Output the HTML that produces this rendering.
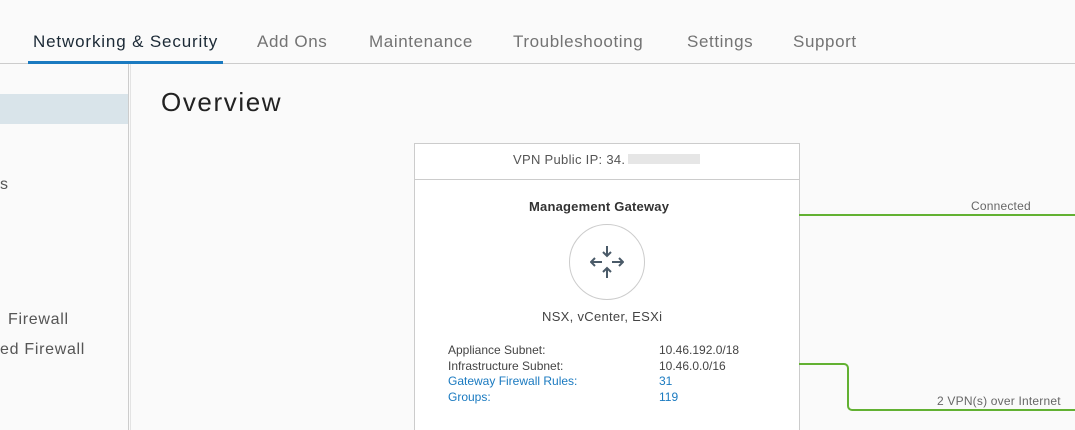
<!DOCTYPE html>
<html><head><style>
html,body{margin:0;width:1075px;height:430px;overflow:hidden}
body{background:#fafafa;font-family:"Liberation Sans",sans-serif;position:relative}
.a{position:absolute;white-space:nowrap}
.tab{top:32px;font-size:17px;color:#737373;letter-spacing:0.6px}
</style></head><body>
<div class="a" style="left:0;top:0;width:1075px;height:63px;background:#fafafa;border-bottom:1px solid #ccc"></div>
<div class="a tab" style="left:33px;color:#1c2a36;letter-spacing:0.85px">Networking &amp; Security</div>
<div class="a" style="left:28px;top:61px;width:195px;height:3px;background:#1a7ac0"></div>
<div class="a tab" style="left:257px">Add Ons</div>
<div class="a tab" style="left:369px">Maintenance</div>
<div class="a tab" style="left:513px">Troubleshooting</div>
<div class="a tab" style="left:687px">Settings</div>
<div class="a tab" style="left:793px">Support</div>
<div class="a" style="left:128px;top:64px;width:1px;height:366px;background:#ccc"></div>
<div class="a" style="left:130px;top:64px;width:1px;height:366px;background:#e3e3e3"></div>
<div class="a" style="left:0;top:94px;width:128px;height:30px;background:#d9e4ea"></div>
<div class="a" style="left:0;top:176px;font-size:16px;color:#555">s</div>
<div class="a" style="left:8px;top:311px;font-size:16px;color:#555;letter-spacing:0.7px">Firewall</div>
<div class="a" style="left:0;top:341px;font-size:16px;color:#555;letter-spacing:0.7px">ed Firewall</div>
<div class="a" style="left:161px;top:87px;font-size:26px;color:#222;letter-spacing:1.6px">Overview</div>
<div class="a" style="left:414px;top:143px;width:384px;height:300px;background:#fff;border:1px solid #ccc"></div>
<div class="a" style="left:415px;top:179px;width:384px;height:1px;background:#ccc"></div>
<div class="a" style="left:513px;top:152px;font-size:13px;color:#555;letter-spacing:0.3px">VPN Public IP: 34.</div>
<div class="a" style="left:628px;top:154px;width:72px;height:10px;background:#e6e6e6"></div>
<div class="a" style="left:529px;top:199px;font-size:13px;color:#333;font-weight:bold;letter-spacing:0.2px">Management Gateway</div>
<div class="a" style="left:569px;top:224px;width:74px;height:74px;border:1px solid #ccc;border-radius:50%"></div>
<svg class="a" style="left:590px;top:245px" width="34" height="34" viewBox="0 0 34 34" fill="none" stroke="#4a5a68" stroke-width="2">
<path d="M17 1v10M13 7l4 4 4-4M17 33V23M13 27l4-4 4 4M1 17h11M5 13l-4 4 4 4M33 17H22M29 13l4 4-4 4"/></svg>
<div class="a" style="left:542px;top:309px;font-size:13px;color:#444;letter-spacing:0.3px">NSX, vCenter, ESXi</div>
<div class="a" style="left:448px;top:343px;font-size:12px;line-height:15.5px;color:#444">Appliance Subnet:<br>Infrastructure Subnet:<br><span style="color:#1a7ac0">Gateway Firewall Rules:<br>Groups:</span></div>
<div class="a" style="left:659px;top:343px;font-size:12px;line-height:15.5px;color:#444">10.46.192.0/18<br>10.46.0.0/16<br><span style="color:#1a7ac0">31<br>119</span></div>
<div class="a" style="left:799px;top:214px;width:276px;height:2px;background:#62b132"></div>
<div class="a" style="left:971px;top:199px;font-size:12px;color:#666;letter-spacing:0.2px">Connected</div>
<svg class="a" style="left:799px;top:360px" width="276" height="54"><path d="M0 4H45a4 4 0 0 1 4 4V46a4 4 0 0 0 4 4H276" fill="none" stroke="#62b132" stroke-width="2"/></svg>
<div class="a" style="left:937px;top:394px;font-size:12px;color:#666;letter-spacing:0.2px">2 VPN(s) over Internet</div>
</body></html>
